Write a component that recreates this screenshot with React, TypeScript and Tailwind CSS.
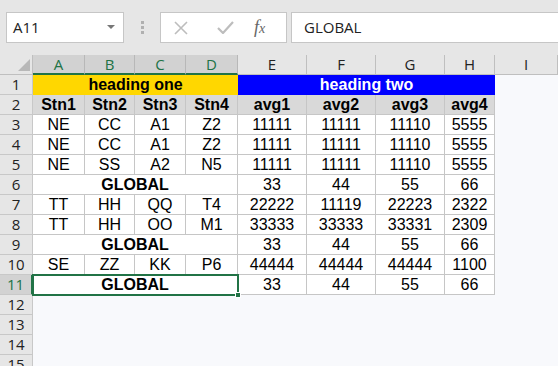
import React from "react";

const cols = ["A", "B", "C", "D", "E", "F", "G", "H", "I"];

type Row = { n: number; kind: "data" | "global"; left?: string[]; right: string[] };

const rows: Row[] = [
  { n: 3, kind: "data", left: ["NE", "CC", "A1", "Z2"], right: ["11111", "11111", "11110", "5555"] },
  { n: 4, kind: "data", left: ["NE", "CC", "A1", "Z2"], right: ["11111", "11111", "11110", "5555"] },
  { n: 5, kind: "data", left: ["NE", "SS", "A2", "N5"], right: ["11111", "11111", "11110", "5555"] },
  { n: 6, kind: "global", right: ["33", "44", "55", "66"] },
  { n: 7, kind: "data", left: ["TT", "HH", "QQ", "T4"], right: ["22222", "11119", "22223", "2322"] },
  { n: 8, kind: "data", left: ["TT", "HH", "OO", "M1"], right: ["33333", "33333", "33331", "2309"] },
  { n: 9, kind: "global", right: ["33", "44", "55", "66"] },
  { n: 10, kind: "data", left: ["SE", "ZZ", "KK", "P6"], right: ["44444", "44444", "44444", "1100"] },
  { n: 11, kind: "global", right: ["33", "44", "55", "66"] },
];

const cell = "h-[20px] flex items-center justify-center border-r border-b border-[#c6c6c6] bg-white text-black";

function RowHead({ n, selected }: { n: number; selected?: boolean }) {
  return (
    <div
      className={`h-[20px] flex items-center justify-center border-r border-b border-[#c8c8c8] font-['Open_Sans',sans-serif] text-[15px] ${
        selected ? "bg-[#d2d2d2] text-[#217346] border-r-[#217346] border-r-2" : "bg-[#e6e6e6] text-[#222]"
      }`}
    >
      {n}
    </div>
  );
}

export default function App() {
  return (
    <div className="w-[558px] h-[366px] overflow-hidden bg-[#e6e6e6] flex flex-col">
      <div className="h-[2px] bg-[#217346]" />
      {/* formula bar */}
      <div className="flex items-center h-[31px] mt-[12px] mb-[12px] font-['Open_Sans',sans-serif] text-[15px] text-[#222]">
        <div className="ml-[6px] w-[118px] h-[31px] bg-white border border-[#c6c6c6] flex items-center justify-between pl-[6px] pr-[8px]">
          <span>A11</span>
          <svg width="8" height="5" viewBox="0 0 8 5"><path d="M0 0h8L4 4z" fill="#777" /></svg>
        </div>
        <div className="w-[36px] flex flex-col items-center gap-[2px]">
          <span className="w-[3px] h-[3px] bg-[#b0b0b0]" />
          <span className="w-[3px] h-[3px] bg-[#b0b0b0]" />
          <span className="w-[3px] h-[3px] bg-[#b0b0b0]" />
        </div>
        <div className="w-[127px] h-[31px] bg-white border border-[#c6c6c6] flex items-center pl-[13px]">
          <svg width="14" height="14" viewBox="0 0 14 14"><path d="M1 1l12 12M13 1L1 13" stroke="#bdbdbd" strokeWidth="1.6" /></svg>
          <svg className="ml-[29px]" width="17" height="13" viewBox="0 0 17 13"><path d="M1 7l5 5L16 1" stroke="#bdbdbd" strokeWidth="2.2" fill="none" /></svg>
          <span className="ml-[20px] font-['Liberation_Serif',serif] italic text-[18px] text-[#666]">
            f<span className="text-[14px]">x</span>
          </span>
        </div>
        <div className="ml-[4px] flex-1 h-[31px] bg-white border border-[#c6c6c6] border-r-0 flex items-center pl-[12px]">
          GLOBAL
        </div>
      </div>
      {/* grid */}
      <div className="relative flex-1 bg-[#f8f9fc] grid grid-cols-[33px_52px_50px_51px_52px_69px_69px_69px_50px_1fr] auto-rows-[20px] font-['Liberation_Sans',Arial,sans-serif] text-[16px] content-start">
        {/* column headers */}
        <div className="h-[20px] bg-[#e6e6e6] border-r border-b border-[#bfbfbf] flex items-end justify-end pr-[2px] pb-[3px]">
          <svg width="12" height="12" viewBox="0 0 12 12"><path d="M12 0v12H0z" fill="#b8b8b8" /></svg>
        </div>
        {cols.map((c, i) => (
          <div
            key={c}
            className={`h-[20px] flex items-center justify-center border-r font-['Open_Sans',sans-serif] text-[15px] ${
              i < 4
                ? "bg-[#d2d2d2] text-[#217346] border-b-2 border-b-[#217346] border-r-[#b8b8b8]"
                : "bg-[#e6e6e6] text-[#222] border-b border-[#bfbfbf]"
            }`}
          >
            {c}
          </div>
        ))}

        {/* row 1 */}
        <RowHead n={1} />
        <div className="col-span-4 h-[20px] flex items-center justify-center bg-[#ffd700] font-bold text-black">heading one</div>
        <div className="col-span-4 h-[20px] flex items-center justify-center bg-[#0000ff] font-bold text-white">heading two</div>
        <div />

        {/* row 2 */}
        <RowHead n={2} />
        {["Stn1", "Stn2", "Stn3", "Stn4", "avg1", "avg2", "avg3", "avg4"].map((t) => (
          <div key={t} className="h-[20px] flex items-center justify-center border-r border-b border-[#c6c6c6] bg-[#d9d9d9] font-bold text-black">
            {t}
          </div>
        ))}
        <div />

        {rows.map((r) => (
          <React.Fragment key={r.n}>
            <RowHead n={r.n} selected={r.n === 11} />
            {r.kind === "global" ? (
              <div className={`${cell} col-span-4 font-bold`}>GLOBAL</div>
            ) : (
              r.left!.map((t, i) => (
                <div key={i} className={cell}>
                  {t}
                </div>
              ))
            )}
            {r.right.map((t, i) => (
              <div key={i} className={cell}>
                {t}
              </div>
            ))}
            <div />
          </React.Fragment>
        ))}

        {[12, 13, 14, 15].map((n) => (
          <React.Fragment key={n}>
            <RowHead n={n} />
            <div className="col-span-9" />
          </React.Fragment>
        ))}

        {/* selection */}
        <div className="absolute left-[32px] top-[219px] w-[207px] h-[22px] border-2 border-[#217346] pointer-events-none" />
        <div className="absolute left-[235px] top-[237px] w-[6px] h-[6px] bg-[#217346] border border-white" />
      </div>
    </div>
  );
}
